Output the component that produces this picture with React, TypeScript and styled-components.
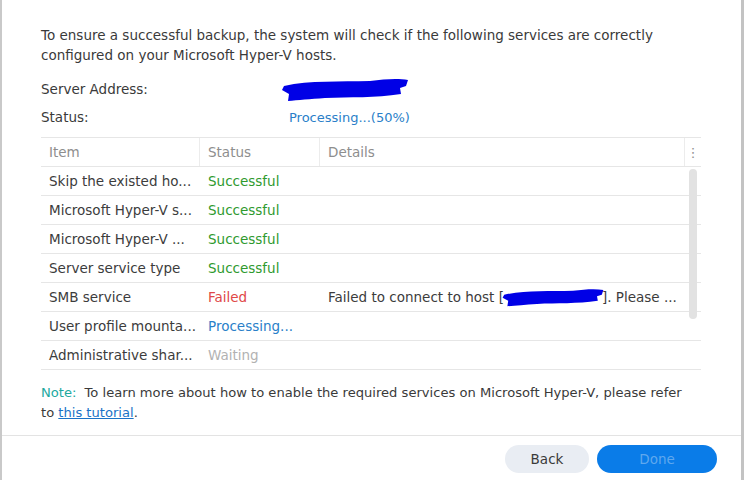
import { createGlobalStyle } from "styled-components";
import styled from "styled-components";

type Tone = "success" | "failed" | "processing" | "waiting";

const rows: { item: string; status: string; tone: Tone; details?: boolean }[] = [
  { item: "Skip the existed ho...", status: "Successful", tone: "success" },
  { item: "Microsoft Hyper-V s...", status: "Successful", tone: "success" },
  { item: "Microsoft Hyper-V ...", status: "Successful", tone: "success" },
  { item: "Server service type", status: "Successful", tone: "success" },
  { item: "SMB service", status: "Failed", tone: "failed", details: true },
  { item: "User profile mounta...", status: "Processing...", tone: "processing" },
  { item: "Administrative shar...", status: "Waiting", tone: "waiting" },
];

const toneColors: Record<Tone, string> = {
  success: "#2f9a2f",
  failed: "#e04848",
  processing: "#2a7fc9",
  waiting: "#b2b2b2",
};

const Scribble = ({ width, height }: { width: number; height: number }) => (
  <svg width={width} height={height} viewBox="0 0 130 26" preserveAspectRatio="none">
    <path
      d="M4 10 C30 4 60 6 90 5 C105 3 118 2 128 4 L126 10 L120 12 L121 18 C95 22 70 21 45 22 C30 23 18 24 8 25 L9 18 L2 14 Z"
      fill="#0000e6"
    />
  </svg>
);

const App = () => {
  return (
    <>
      <GlobalStyle />
      <Window>
        <Body>
          <Intro>
            To ensure a successful backup, the system will check if the following services are correctly
            configured on your Microsoft Hyper-V hosts.
          </Intro>
          <InfoGrid>
            <Label>Server Address:</Label>
            <Value>
              <Redacted $shift={-9}>
                <Scribble width={130} height={26} />
              </Redacted>
            </Value>
            <Label>Status:</Label>
            <Value>
              <Progress>Processing...(50%)</Progress>
            </Value>
          </InfoGrid>
          <Table>
            <HeaderRow>
              <HeadCell>Item</HeadCell>
              <HeadCell>Status</HeadCell>
              <HeadCell>Details</HeadCell>
              <MenuCell>⋮</MenuCell>
            </HeaderRow>
            <Rows>
              {rows.map((row, index) => (
                <Row key={index}>
                  <Cell>{row.item}</Cell>
                  <StatusCell tone={row.tone}>{row.status}</StatusCell>
                  <Cell>
                    {row.details && (
                      <DetailText>
                        Failed to connect to host [
                        <Redacted $shift={-3}>
                          <Scribble width={104} height={20} />
                        </Redacted>
                        ]. Please ...
                      </DetailText>
                    )}
                  </Cell>
                  <span />
                </Row>
              ))}
              <Scrollbar />
            </Rows>
          </Table>
          <Note>
            <NoteLabel>Note:</NoteLabel> To learn more about how to enable the required services on Microsoft Hyper-V, please refer
            <br />
            to <Link href="#">this tutorial</Link>.
          </Note>
        </Body>
        <Footer>
          <Button>Back</Button>
          <Button primary>Done</Button>
        </Footer>
      </Window>
    </>
  );
};

const GlobalStyle = createGlobalStyle`
  html, body {
    margin: 0;
    padding: 0;
    background: #ffffff;
  }
  body {
    font-family: "DejaVu Sans", Verdana, sans-serif;
    color: #3c3c3c;
  }
`;

const Window = styled.div`
  width: 744px;
  height: 480px;
  box-sizing: border-box;
  border-left: 2px solid #c9c9c9;
  border-right: 3px solid #c3c3c3;
  display: flex;
  flex-direction: column;
  background: #fff;
`;

const Body = styled.div`
  padding: 25px 41px 12px 39px;
  display: flex;
  flex-direction: column;
  border-bottom: 1px solid #e3e3e3;
`;

const Intro = styled.p`
  margin: 0;
  font-size: 13.5px;
  line-height: 20px;
  color: #3a3a3a;
`;

const InfoGrid = styled.div`
  display: grid;
  grid-template-columns: 248px 1fr;
  grid-auto-rows: 28px;
  align-items: center;
  margin-top: 10px;
`;

const Label = styled.div`
  font-size: 13.5px;
  color: #3a3a3a;
`;

const Value = styled.div`
  display: flex;
  align-items: center;
`;

const Progress = styled.span`
  font-size: 13px;
  color: #2a7fc9;
`;

const Table = styled.div`
  margin-top: 6px;
  border-top: 1px solid #e6e6e6;
  width: 660px;
`;

const columns = "159px 120px 1fr 16px";

const HeaderRow = styled.div`
  display: grid;
  grid-template-columns: ${columns};
  height: 28px;
  border-bottom: 1px solid #e6e6e6;
`;

const HeadCell = styled.div`
  display: flex;
  align-items: center;
  padding: 0 8px;
  font-size: 13.5px;
  color: #8e8e8e;
  border-right: 1px solid #ececec;
`;

const MenuCell = styled.div`
  display: flex;
  align-items: center;
  justify-content: center;
  font-size: 13px;
  color: #8e8e8e;
`;

const Rows = styled.div`
  position: relative;
`;

const Row = styled.div`
  display: grid;
  grid-template-columns: ${columns};
  height: 28px;
  border-bottom: 1px solid #e6e6e6;
`;

const Cell = styled.div`
  display: flex;
  align-items: center;
  padding: 0 8px;
  font-size: 13.5px;
  color: #3c3c3c;
  white-space: nowrap;
  overflow: hidden;
`;

const StatusCell = styled(Cell)<{ tone: Tone }>`
  color: ${({ tone }) => toneColors[tone]};
`;

const DetailText = styled.span`
  display: flex;
  align-items: center;
`;

const Redacted = styled.span<{ $shift: number }>`
  display: inline-flex;
  margin-left: ${({ $shift }) => $shift}px;
  margin-right: -3px;
`;

const Scrollbar = styled.div`
  position: absolute;
  right: 4px;
  top: 2px;
  width: 8px;
  height: 150px;
  border-radius: 4px;
  background: #e2e2e2;
`;

const Note = styled.p`
  margin: 13px 0 0;
  font-size: 13.1px;
  line-height: 20px;
  color: #3a3a3a;
`;

const NoteLabel = styled.span`
  color: #22a9a0;
  margin-right: 4px;
`;

const Link = styled.a`
  color: #1a73c7;
  text-decoration: underline;
`;

const Footer = styled.div`
  flex: 1;
  display: flex;
  justify-content: flex-end;
  align-items: flex-start;
  gap: 8px;
  padding: 9px 24px 0 0;
`;

const Button = styled.button<{ primary?: boolean }>`
  height: 28px;
  width: ${({ primary }) => (primary ? "120px" : "84px")};
  border: none;
  border-radius: 14px;
  font-family: "DejaVu Sans", Verdana, sans-serif;
  font-size: 13.5px;
  background: ${({ primary }) => (primary ? "#0a7ce8" : "#e9edf3")};
  color: ${({ primary }) => (primary ? "#5fa8ee" : "#3a3a3a")};
`;

export default App;
